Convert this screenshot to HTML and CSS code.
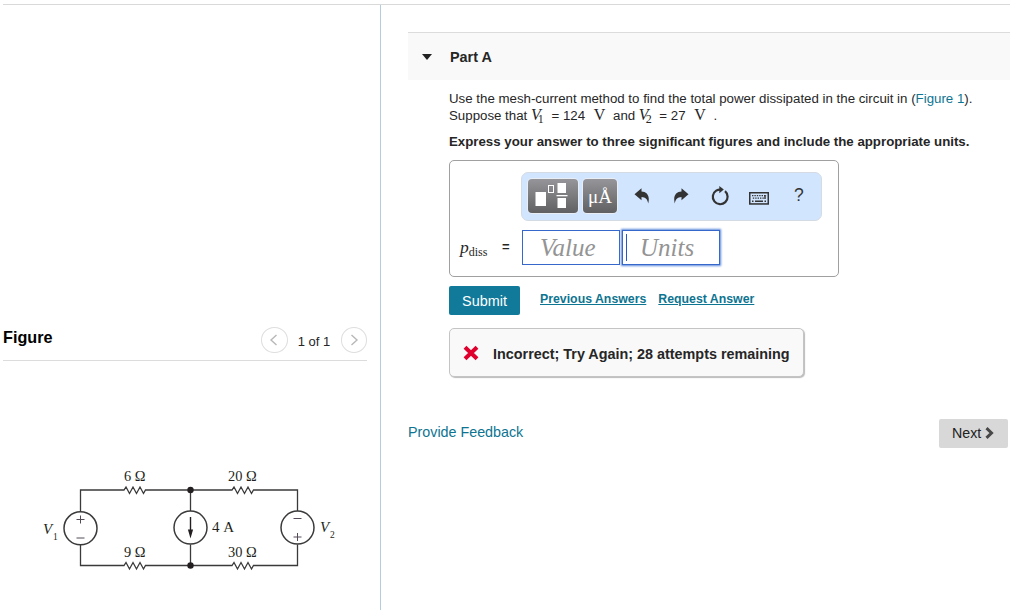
FILE: index.html
```html
<!DOCTYPE html>
<html lang="en">
<head>
    <meta charset="UTF-8">
    <meta name="viewport" content="width=device-width, initial-scale=1.0">
    <title>Part A - Mesh-current method</title>
    <link rel="stylesheet" href="styles.css">
</head>
<body>
    <div class="page">
        <div class="figure-panel">
            <div class="figure-header">
                <h2>Figure</h2>
                <div class="pager">
                    <button type="button" class="circle" aria-label="Previous figure">
                        <svg width="10" height="12" viewBox="0 0 10 12"><path d="M7.5 1 L2 6 L7.5 11"/></svg>
                    </button>
                    <span>1 of 1</span>
                    <button type="button" class="circle" aria-label="Next figure">
                        <svg width="10" height="12" viewBox="0 0 10 12"><path d="M2.5 1 L8 6 L2.5 11"/></svg>
                    </button>
                </div>
            </div>

            <svg class="circuit" width="310" height="120" viewBox="30 460 310 120">
                <!-- Wires and resistors -->
                <path class="wire" d="M80.5 511 V490 H124 l2 -3 l3.5 6.5 l3.5 -6.5 l3.5 6.5 l3.5 -6.5 l3.5 6.5 l2 -3.5 H232 l2 -3 l3.5 6.5 l3.5 -6.5 l3.5 6.5 l3.5 -6.5 l3.5 6.5 l2 -3.5 H297.5 V511"/>
                <path class="wire" d="M80.5 545 V565.5 H124 l2 -3 l3.5 6.5 l3.5 -6.5 l3.5 6.5 l3.5 -6.5 l3.5 6.5 l2 -3.5 H232 l2 -3 l3.5 6.5 l3.5 -6.5 l3.5 6.5 l3.5 -6.5 l3.5 6.5 l2 -3.5 H297.5 V544.5"/>
                <path class="wire" d="M190.5 490 V511 M190.5 544.5 V565.5"/>
                <circle class="dot" cx="190.5" cy="490" r="3.2"/>
                <circle class="dot" cx="190.5" cy="565.5" r="3.2"/>

                <!-- Sources -->
                <circle class="source" cx="80.5" cy="528.3" r="16.5"/>
                <circle class="source" cx="190.5" cy="527.6" r="16.5"/>
                <circle class="source" cx="297.5" cy="527.6" r="16.5"/>
                <path class="sign" d="M76.5 519.5 h8 M80.5 515.5 v8 M76.5 538 h8"/>
                <path class="sign" d="M293.5 518.5 h8 M293.5 537 h8 M297.5 533 v8"/>
                <path class="arrow" d="M190.5 517 V531"/>
                <path class="dot" d="M187.9 529.5 H193.1 L190.5 538.5 Z"/>

                <!-- Labels -->
                <text x="124" y="481">6 Ω</text>
                <text x="228" y="481">20 Ω</text>
                <text x="124" y="557">9 Ω</text>
                <text x="228" y="557">30 Ω</text>
                <text class="current" x="212" y="532">4 A</text>
                <text class="var" x="43" y="534">V</text>
                <text class="sub" x="53" y="540">1</text>
                <text class="var" x="320" y="532">V</text>
                <text class="sub" x="330" y="538">2</text>
            </svg>
        </div>

        <div class="question-panel">
            <div class="part-header">
                <span class="caret"></span>
                <h2>Part A</h2>
            </div>

            <div class="part-body">
                <p class="prompt">
                    Use the mesh-current method to find the total power dissipated in the circuit in (<a href="#">Figure 1</a>).<br>
                    Suppose that <span class="math"><i>V</i><sub>1</sub></span> = 124 <span class="unit">V</span> and <span class="math"><i>V</i><sub>2</sub></span> = 27 <span class="unit">V</span> .
                </p>
                <p class="instructions">Express your answer to three significant figures and include the appropriate units.</p>

                <div class="answer-box">
                    <div class="toolbar">
                        <button type="button" class="tool templates" aria-label="Templates">
                            <svg width="50" height="34" viewBox="0 0 50 34">
                                <rect x="7.5" y="13" width="10.5" height="14" fill="#fff"/>
                                <rect x="20.5" y="6.5" width="5" height="7" fill="none" stroke="#fff"/>
                                <rect x="29.5" y="4" width="8.5" height="10" fill="#fff"/>
                                <rect x="28.5" y="16" width="11" height="1.3" fill="#fff"/>
                                <rect x="29.5" y="19" width="8.5" height="10" fill="#fff"/>
                            </svg>
                        </button>
                        <button type="button" class="tool symbols">μÅ</button>
                        <div class="icons">
                            <svg width="16" height="16" viewBox="0 0 16 16"><path fill="#333" d="M0.5 6.2 L7.5 0.3 V3.6 C13 3.8 16.2 8 14.2 15.5 C13.5 11 11.5 9 7.5 8.9 V12.2 Z"/></svg>
                            <svg width="16" height="16" viewBox="0 0 16 16"><path fill="#333" d="M15.5 6.2 L8.5 0.3 V3.6 C3 3.8 -0.2 8 1.8 15.5 C2.5 11 4.5 9 8.5 8.9 V12.2 Z"/></svg>
                            <svg class="reset" width="18" height="20" viewBox="0 0 18 20">
                                <path fill="none" stroke="#333" stroke-width="2.2" d="M14 5.2 A7.4 7.4 0 1 1 5.2 4.6 Q7 3.6 9 3.6"/>
                                <path fill="#333" d="M8.3 0 L12.8 3.6 L8.3 7.2 Z"/>
                            </svg>
                            <svg class="keyboard" width="20" height="13" viewBox="0 0 20 13">
                                <rect x="0.75" y="0.75" width="18.5" height="11.2" fill="none" stroke="#333" stroke-width="1.5"/>
                                <path stroke="#333" stroke-width="1.3" stroke-dasharray="1.4 1" d="M3 3.7 H17.5 M3.8 6.2 H15"/>
                                <path stroke="#333" stroke-width="1.4" d="M16 3 V7 M3 9.3 H4.5 M6 9.3 H14 M15.5 9.3 H17"/>
                            </svg>
                            <span class="help">?</span>
                        </div>
                    </div>
                    <div class="answer-row">
                        <label class="answer-label"><i>p</i><sub>diss</sub></label>
                        <span class="equals">=</span>
                        <div class="field">Value</div>
                        <div class="field focused">Units</div>
                    </div>
                </div>

                <div class="actions">
                    <button type="button" class="submit">Submit</button>
                    <a href="#">Previous Answers</a>
                    <a href="#">Request Answer</a>
                </div>

                <div class="feedback">
                    <svg width="16" height="16" viewBox="0 0 16 16"><path stroke="#e0002d" stroke-width="4" d="M2 2.2 L14 13.8 M14 2.2 L2 13.8"/></svg>
                    <span>Incorrect; Try Again; 28 attempts remaining</span>
                </div>
            </div>

            <div class="part-footer">
                <a href="#">Provide Feedback</a>
                <button type="button" class="next">Next
                    <svg width="9" height="12" viewBox="0 0 9 12"><path d="M1.5 1.2 L6.5 6 L1.5 10.8"/></svg>
                </button>
            </div>
        </div>
    </div>
</body>
</html>
```
FILE: styles.css
```css
* {
    box-sizing: border-box;
}
body {
    margin: 0;
    background-color: #fff;
    color: #262626;
    font-family: "Liberation Sans", Arial, sans-serif;
    overflow: hidden;
}
h2, p {
    margin: 0;
}
a {
    color: #0d7491;
    text-decoration: none;
}
button {
    padding: 0;
    border: none;
    font-family: inherit;
}
.page {
    display: flex;
    width: 1007px;
    height: 606px;
    margin: 4px 0 0 3px;
    border-top: 1px solid #d9d9d9;
}

/* Figure */
.figure-panel {
    width: 378px;
    padding-right: 13px;
    border-right: 1px solid #b5cbde;
}
.figure-header {
    display: flex;
    justify-content: space-between;
    height: 36px;
    margin-top: 320px;
    border-bottom: 1px solid #dcdcdc;
}
.figure-header h2 {
    padding-top: 3px;
    color: #000;
    font-size: 16.2px;
    line-height: 18px;
}
.pager {
    display: flex;
    align-items: flex-start;
    font-size: 13px;
}
.pager span {
    width: 53px;
    padding-top: 9px;
    text-align: center;
    line-height: 16px;
}
.circle {
    display: flex;
    align-items: center;
    justify-content: center;
    width: 26.5px;
    height: 26px;
    margin-top: 2px;
    border: 1px solid #dedede;
    border-radius: 50%;
    background-color: #fff;
}
.circle path {
    fill: none;
    stroke: #b8b8b8;
    stroke-width: 1.4;
}
.circuit {
    display: block;
    margin: 99px 0 0 27px;
    fill: #231f20;
    font-family: "Liberation Serif", serif;
    font-size: 14.4px;
}
.circuit .wire {
    fill: none;
    stroke: #3a3a3a;
    stroke-width: 1.3;
}
.circuit .source {
    fill: none;
    stroke: #3a3a3a;
    stroke-width: 1.5;
}
.circuit .sign {
    stroke: #554a58;
    stroke-width: 1;
}
.circuit .arrow {
    stroke: #231f20;
    stroke-width: 1.4;
}
.circuit .current {
    font-size: 15px;
    letter-spacing: 0.4px;
}
.circuit .var {
    font-size: 15px;
    font-style: italic;
}
.circuit .sub {
    font-size: 9.5px;
}

/* Question */
.question-panel {
    width: 602px;
    margin-left: 27px;
    padding-top: 27px;
}
.part-header {
    display: flex;
    align-items: center;
    height: 48px;
    padding-left: 14px;
    border-top: 1px solid #dcdcdc;
    background-color: #f9f9f9;
}
.part-header h2 {
    margin-left: 18px;
    font-size: 14.4px;
}
.caret {
    border: 5.5px solid transparent;
    border-width: 6px 5.5px 0;
    border-top-color: #222;
}
.part-body {
    padding: 11px 0 0 41px;
}
.prompt {
    font-size: 13.29px;
    line-height: 16px;
    white-space: nowrap;
}
.math, .unit {
    display: inline-block;
    height: 16px;
    font-family: "Liberation Serif", serif;
    font-size: 16px;
    line-height: 16px;
}
.math i {
    margin-right: -3px;
}
.math sub {
    font-size: 12px;
    line-height: 0;
    vertical-align: -3px;
}
.math {
    margin-right: 4px;
}
.unit {
    margin: 0 4px 0 5px;
}
.instructions {
    margin-top: 10px;
    font-size: 13.28px;
    font-weight: bold;
    line-height: 16px;
    white-space: nowrap;
}
.answer-box {
    width: 390px;
    height: 117px;
    margin-top: 10px;
    padding-top: 11px;
    border: 1px solid #a0a0a0;
    border-radius: 5px;
}
.toolbar {
    display: flex;
    align-items: center;
    gap: 5px;
    width: 301px;
    height: 49px;
    margin-left: 71px;
    padding: 0 0 1px 6px;
    border: 1px solid #d5dbe2;
    border-radius: 7px;
    background-color: #d1e5ff;
}
.tool {
    height: 34px;
    border-radius: 4px;
    background: linear-gradient(#96969a, #606062);
    box-shadow: 0 0 0 1px #e9eef5;
    color: #fff;
}
.templates {
    width: 50px;
}
.templates svg {
    display: block;
}
.symbols {
    width: 34px;
    font-family: "Liberation Serif", serif;
    font-size: 19px;
    line-height: 36px;
}
.icons {
    display: flex;
    align-items: center;
    gap: 23px;
    margin-left: 12px;
}
.icons .reset {
    margin: -1px 0 0 -1px;
}
.icons .keyboard {
    margin: 5px 0 0 -3px;
}
.help {
    margin: -1px 0 0 2px;
    color: #333;
    font-size: 17.5px;
}
.answer-row {
    display: flex;
    align-items: center;
    height: 35px;
    margin-top: 9px;
    padding-left: 10px;
}
.answer-label {
    width: 42px;
    font-family: "Liberation Serif", serif;
    font-size: 17.5px;
}
.answer-label sub {
    font-size: 12px;
    line-height: 0;
    vertical-align: -3px;
}
.equals {
    width: 20px;
    padding-bottom: 2px;
    font-size: 13px;
    font-weight: bold;
}
.field {
    width: 98px;
    height: 35px;
    padding-left: 17px;
    border: 1px solid #3668cc;
    color: #949494;
    font-family: "Liberation Serif", serif;
    font-size: 25px;
    font-style: italic;
    line-height: 33px;
}
.focused {
    display: flex;
    align-items: center;
    margin-left: 2px;
    padding-left: 3px;
    box-shadow: 0 0 2px 1px #5c88dc;
}
.focused::before {
    content: "";
    width: 1px;
    height: 27px;
    margin-right: 13px;
    background-color: #2458c4;
}
.actions {
    display: flex;
    height: 29px;
    margin-top: 9px;
    font-size: 12.32px;
    font-weight: bold;
    line-height: 26px;
}
.actions a {
    margin-right: 12px;
    text-decoration: underline;
}
.submit {
    width: 71px;
    height: 29px;
    margin-right: 20px;
    border-radius: 2px;
    background-color: #117a9a;
    color: #fff;
    font-size: 14.4px;
}
.feedback {
    display: flex;
    align-items: center;
    width: 355px;
    height: 49px;
    margin-top: 13px;
    padding-left: 13px;
    border: 1px solid #c4c4c4;
    border-radius: 5px;
    background-color: #f9f9f9;
    box-shadow: 1px 1px 1px #bbb;
    font-size: 14.38px;
    font-weight: bold;
    white-space: nowrap;
}
.feedback span {
    margin-left: 14px;
    padding-top: 2px;
}
.part-footer {
    display: flex;
    justify-content: space-between;
    margin-top: 42px;
    font-size: 14.3px;
    line-height: 26px;
}
.next {
    display: flex;
    align-items: center;
    gap: 4px;
    width: 69px;
    height: 29px;
    margin-right: 2px;
    padding: 0 0 1px 13px;
    border-radius: 2px;
    background-color: #d8d8d8;
    color: #222;
    font-size: 14.2px;
}
.next path {
    fill: none;
    stroke: #484848;
    stroke-width: 3;
}
```
